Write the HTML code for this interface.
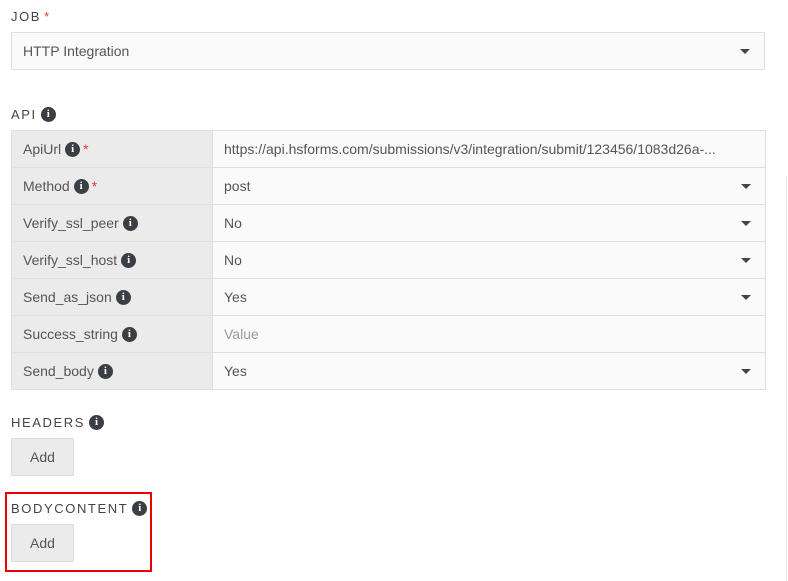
<!DOCTYPE html>
<html><head><style>
body{margin:0;width:788px;height:581px;background:#fff;font-family:"Liberation Sans",sans-serif;color:#555;position:relative;overflow:hidden}
.a{position:absolute}
.f{display:flex;align-items:center}
.lbl{font-size:13px;letter-spacing:1.6px;color:#444;height:16px}
.req{color:#e53935;letter-spacing:0;margin-left:3px}
.i{display:inline-block;width:15px;height:15px;border-radius:50%;background:#3a3f45;color:#fff;font:bold 11px/15px "Liberation Serif",serif;text-align:center;letter-spacing:0;margin-left:4px;flex:none}
.sel{border:1px solid #e0e0e0;background:#fafafa;box-sizing:border-box;font-size:14px}
.car{position:absolute;right:14px;top:16px;width:0;height:0;border-left:5px solid transparent;border-right:5px solid transparent;border-top:5px solid #444}
table{border-collapse:collapse;position:absolute;left:11px;top:130px;width:755px;font-size:14px}
td{border:1px solid #e0e0e0;height:36px;padding:0 0 0 11px;position:relative;line-height:16px}
td.k{background:#ebebeb;width:189px}
td.v{background:#fafafa}
.btn{background:#ebebeb;border:1px solid #ddd;box-sizing:border-box;width:63px;height:38px;font-size:14px;text-align:center;line-height:36px;color:#555}
</style></head><body>
<div class="a lbl f" style="left:11px;top:8px">JOB<span class="req">*</span></div>
<div class="a sel" style="left:11px;top:32px;width:754px;height:38px;padding:10px 11px">HTTP Integration<div class="car"></div></div>
<div class="a lbl f" style="left:11px;top:106px">API<span class="i">i</span></div>
<table>
<tr><td class="k"><div class="f">ApiUrl<span class="i">i</span><span class="req">*</span></div></td><td class="v">https://api.hsforms.com/submissions/v3/integration/submit/123456/1083d26a-...</td></tr>
<tr><td class="k"><div class="f">Method<span class="i">i</span><span class="req">*</span></div></td><td class="v">post<div class="car"></div></td></tr>
<tr><td class="k"><div class="f">Verify_ssl_peer<span class="i">i</span></div></td><td class="v">No<div class="car"></div></td></tr>
<tr><td class="k"><div class="f">Verify_ssl_host<span class="i">i</span></div></td><td class="v">No<div class="car"></div></td></tr>
<tr><td class="k"><div class="f">Send_as_json<span class="i">i</span></div></td><td class="v">Yes<div class="car"></div></td></tr>
<tr><td class="k"><div class="f">Success_string<span class="i">i</span></div></td><td class="v" style="color:#999">Value</td></tr>
<tr><td class="k"><div class="f">Send_body<span class="i">i</span></div></td><td class="v">Yes<div class="car"></div></td></tr>
</table>
<div class="a" style="left:786px;top:176px;width:1px;height:405px;background:#e6e6e6"></div>
<div class="a lbl f" style="left:11px;top:414px">HEADERS<span class="i">i</span></div>
<div class="a btn" style="left:11px;top:438px">Add</div>
<div class="a" style="left:5px;top:492px;width:143px;height:76px;border:2px solid #e00"></div>
<div class="a lbl f" style="left:11px;top:500px">BODYCONTENT<span class="i">i</span></div>
<div class="a btn" style="left:11px;top:524px">Add</div>
</body></html>
